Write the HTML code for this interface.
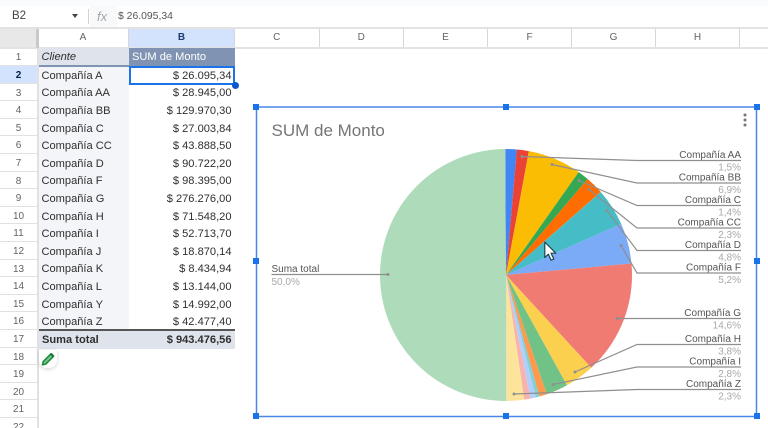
<!DOCTYPE html>
<html><head><meta charset="utf-8"><style>
html,body{margin:0;padding:0;background:#fff}
#p{position:relative;width:768px;height:428px;overflow:hidden;background:#fff;font-family:"Liberation Sans",sans-serif;color:#333;filter:blur(.3px)}
.a{position:absolute}
.t{position:absolute;white-space:nowrap;font-size:11.1px;line-height:17.6px;height:17.6px;color:#2f2f2f;margin-top:.8px}
.r{position:absolute;left:0;width:37px;text-align:center;font-size:10px;color:#5f6368;line-height:20px;border-bottom:1px solid #e1e1e1;height:16.6px;box-sizing:content-box}
.c{position:absolute;top:29px;height:18px;line-height:18px;text-align:center;font-size:10px;color:#5f6368;border-right:1px solid #d6d6d6;box-sizing:border-box}
.v{text-align:right;left:129px;width:102.5px}
.n{left:41.5px}
svg text{font-family:"Liberation Sans",sans-serif}
</style></head><body><div id="p">
<div class="a" style="left:0;top:0;width:768px;height:6px;background:#f9fbfd"></div>
<div class="a" style="left:0;top:27px;width:768px;height:2px;background:#e3e3e3"></div>
<div class="a" style="left:0;top:47px;width:768px;height:1.5px;background:#e3e3e3"></div>
<div class="a" style="left:88px;top:9px;width:1px;height:15px;background:#d0d3d6"></div>
<div class="a" style="left:90px;top:6px;width:27px;height:21px;background:#f8f9fa"></div>
<div class="a" style="left:12px;top:8px;font-size:11.5px;line-height:16px;color:#444">B2</div>
<div class="a" style="left:72px;top:14px;width:0;height:0;border-left:3.5px solid transparent;border-right:3.5px solid transparent;border-top:4px solid #444"></div>
<div class="a" style="left:97px;top:8px;font:italic 13px/17px 'Liberation Sans',sans-serif;color:#a4a7aa">fx</div>
<div class="a" style="left:118px;top:9px;font-size:10.4px;line-height:16px;color:#555">$ 26.095,34</div>

<div class="a" style="left:0;top:29px;width:36px;height:18px;background:#e8e8e8"></div>
<div class="a" style="left:36px;top:29px;width:2.5px;height:19px;background:#c9c9c9"></div>
<div class="a" style="left:37px;top:48px;width:1.5px;height:380px;background:#e1e1e1"></div>
<div class="a" style="left:129px;top:29px;width:106px;height:18px;background:#d3e3fd"></div>
<div class="c" style="left:38px;width:91px">A</div>
<div class="c" style="left:129px;width:106px;color:#1d3c70;font-weight:bold">B</div>
<div class="c" style="left:235px;width:84.5px">C</div>
<div class="c" style="left:319.5px;width:84.5px">D</div>
<div class="c" style="left:404px;width:84px">E</div>
<div class="c" style="left:488px;width:84px">F</div>
<div class="c" style="left:572px;width:84px">G</div>
<div class="c" style="left:656px;width:84px">H</div>
<div class="a" style="left:0;top:65px;width:37px;height:1px;background:#e1e1e1"></div>

<div class="a" style="left:0;top:66px;width:37px;height:18px;background:#d3e3fd"></div>
<div class="r" style="top:48.4px">1</div>
<div class="r" style="top:66px;color:#041e49;font-weight:bold">2</div>
<div class="r" style="top:83.6px">3</div>
<div class="r" style="top:101.2px">4</div>
<div class="r" style="top:118.8px">5</div>
<div class="r" style="top:136.4px">6</div>
<div class="r" style="top:154px">7</div>
<div class="r" style="top:171.6px">8</div>
<div class="r" style="top:189.2px">9</div>
<div class="r" style="top:206.8px">10</div>
<div class="r" style="top:224.4px">11</div>
<div class="r" style="top:242px">12</div>
<div class="r" style="top:259.6px">13</div>
<div class="r" style="top:277.2px">14</div>
<div class="r" style="top:294.8px">15</div>
<div class="r" style="top:312.4px">16</div>
<div class="r" style="top:330px">17</div>
<div class="r" style="top:347.6px">18</div>
<div class="r" style="top:365.2px">19</div>
<div class="r" style="top:382.8px">20</div>
<div class="r" style="top:400.4px">21</div>
<div class="r" style="top:418px">22</div>

<div class="a" style="left:38.5px;top:48px;width:90px;height:18px;background:#dfe3eb"></div>
<div class="a" style="left:128.5px;top:48px;width:106.5px;height:18px;background:#8093b3"></div>
<div class="a" style="left:38.5px;top:65px;width:90px;height:2px;background:#8093b3"></div>
<div class="a" style="left:38.5px;top:67px;width:90px;height:262px;background:#f3f5f8"></div>
<div class="a" style="left:38.5px;top:331px;width:196.5px;height:18px;background:#dfe3eb"></div>
<div class="a" style="left:38.5px;top:329px;width:196.5px;height:2px;background:#555"></div>

<div class="t n" style="top:48px;font-style:italic">Cliente</div>
<div class="t" style="left:132px;top:48px;color:#fff">SUM de Monto</div>
<div class="t n" style="top:67px">Compañía A</div><div class="t v" style="top:67px">$ 26.095,34</div>
<div class="t n" style="top:84.6px">Compañía AA</div><div class="t v" style="top:84.6px">$ 28.945,00</div>
<div class="t n" style="top:102.2px">Compañía BB</div><div class="t v" style="top:102.2px">$ 129.970,30</div>
<div class="t n" style="top:119.8px">Compañía C</div><div class="t v" style="top:119.8px">$ 27.003,84</div>
<div class="t n" style="top:137.4px">Compañía CC</div><div class="t v" style="top:137.4px">$ 43.888,50</div>
<div class="t n" style="top:155px">Compañía D</div><div class="t v" style="top:155px">$ 90.722,20</div>
<div class="t n" style="top:172.6px">Compañía F</div><div class="t v" style="top:172.6px">$ 98.395,00</div>
<div class="t n" style="top:190.2px">Compañía G</div><div class="t v" style="top:190.2px">$ 276.276,00</div>
<div class="t n" style="top:207.8px">Compañía H</div><div class="t v" style="top:207.8px">$ 71.548,20</div>
<div class="t n" style="top:225.4px">Compañía I</div><div class="t v" style="top:225.4px">$ 52.713,70</div>
<div class="t n" style="top:243px">Compañía J</div><div class="t v" style="top:243px">$ 18.870,14</div>
<div class="t n" style="top:260.6px">Compañía K</div><div class="t v" style="top:260.6px">$ 8.434,94</div>
<div class="t n" style="top:278.2px">Compañía L</div><div class="t v" style="top:278.2px">$ 13.144,00</div>
<div class="t n" style="top:295.8px">Compañía Y</div><div class="t v" style="top:295.8px">$ 14.992,00</div>
<div class="t n" style="top:313.4px">Compañía Z</div><div class="t v" style="top:313.4px">$ 42.477,40</div>
<div class="t n" style="top:331.5px;font-weight:bold;left:42px">Suma total</div><div class="t v" style="top:331.5px;font-weight:bold">$ 943.476,56</div>

<div class="a" style="left:129px;top:66px;width:106px;height:18.5px;border:2px solid #1a73e8;box-sizing:border-box"></div>
<div class="a" style="left:231.5px;top:81.5px;width:7px;height:7px;border-radius:50%;background:#0b57d0"></div>

<div class="a" style="left:39px;top:350px;width:18px;height:18px;border-radius:0 0 8px 8px;background:#fff;box-shadow:0 1px 4px rgba(0,0,0,.18)"></div>
<svg class="a" style="left:39px;top:350px" width="18" height="18" viewBox="0 0 18 18"><path d="M3.5 14.800l.8-3.300 7.700-7.700 2.500 2.500-7.700 7.700z" fill="#7cc592" stroke="#1e8e3e" stroke-width="1.600" stroke-linejoin="round"/><path d="M11.500 3.500l3 3" stroke="#137333" stroke-width="2.200"/></svg>

<svg class="a" style="left:0;top:0" width="768" height="428" viewBox="0 0 768 428">
<rect x="256.5" y="107" width="500" height="309.5" fill="#fff" stroke="#4a86e8" stroke-width="1.5"/>
<g fill="#1a73e8"><rect x="253" y="104" width="6" height="6"/><rect x="503" y="104" width="6" height="6"/><rect x="754" y="104" width="6" height="6"/><rect x="253" y="258" width="6" height="6"/><rect x="754" y="258" width="6" height="6"/><rect x="253" y="413" width="6" height="6"/><rect x="503" y="413" width="6" height="6"/><rect x="754" y="413" width="6" height="6"/></g>
<g fill="#757575"><circle cx="745" cy="115" r="1.5"/><circle cx="745" cy="120" r="1.5"/><circle cx="745" cy="125" r="1.5"/></g>
<text x="271.5" y="136" font-size="17" fill="#757575">SUM de Monto</text>
<g fill="none" stroke-width="126" transform="rotate(-90 506 275)">
<circle cx="506" cy="275" r="63" pathLength="100" stroke="#4285f4" stroke-dasharray="1.38 98.62" stroke-dashoffset="0"/>
<circle cx="506" cy="275" r="63" pathLength="100" stroke="#ea4335" stroke-dasharray="1.53 98.47" stroke-dashoffset="-1.38"/>
<circle cx="506" cy="275" r="63" pathLength="100" stroke="#fbbc04" stroke-dasharray="6.89 93.11" stroke-dashoffset="-2.91"/>
<circle cx="506" cy="275" r="63" pathLength="100" stroke="#34a853" stroke-dasharray="1.43 98.57" stroke-dashoffset="-9.8"/>
<circle cx="506" cy="275" r="63" pathLength="100" stroke="#ff6d01" stroke-dasharray="2.33 97.67" stroke-dashoffset="-11.23"/>
<circle cx="506" cy="275" r="63" pathLength="100" stroke="#46bdc6" stroke-dasharray="4.81 95.19" stroke-dashoffset="-13.56"/>
<circle cx="506" cy="275" r="63" pathLength="100" stroke="#7baaf7" stroke-dasharray="5.21 94.79" stroke-dashoffset="-18.37"/>
<circle cx="506" cy="275" r="63" pathLength="100" stroke="#f07b72" stroke-dasharray="14.64 85.36" stroke-dashoffset="-23.58"/>
<circle cx="506" cy="275" r="63" pathLength="100" stroke="#fcd04f" stroke-dasharray="3.79 96.21" stroke-dashoffset="-38.22"/>
<circle cx="506" cy="275" r="63" pathLength="100" stroke="#71c287" stroke-dasharray="2.79 97.21" stroke-dashoffset="-42.01"/>
<circle cx="506" cy="275" r="63" pathLength="100" stroke="#ff994d" stroke-dasharray="1 99" stroke-dashoffset="-44.8"/>
<circle cx="506" cy="275" r="63" pathLength="100" stroke="#7ed1d7" stroke-dasharray="0.45 99.55" stroke-dashoffset="-45.8"/>
<circle cx="506" cy="275" r="63" pathLength="100" stroke="#b3cefb" stroke-dasharray="0.7 99.3" stroke-dashoffset="-46.25"/>
<circle cx="506" cy="275" r="63" pathLength="100" stroke="#f7b4ae" stroke-dasharray="0.8 99.2" stroke-dashoffset="-46.95"/>
<circle cx="506" cy="275" r="63" pathLength="100" stroke="#fde49b" stroke-dasharray="2.25 97.75" stroke-dashoffset="-47.75"/>
<circle cx="506" cy="275" r="63" pathLength="100" stroke="#aedcba" stroke-dasharray="50 50" stroke-dashoffset="-50"/>
</g>
<g fill="none" stroke="#8f8f8f" stroke-width="1.2">
<path d="M522 156.500L637 160.500H741"/>
<path d="M552 164.500L637 183H741"/>
<path d="M579 180.500L637 205.500H741"/>
<path d="M589 189.500L637 228H741"/>
<path d="M607 210.500L637 250.500H741"/>
<path d="M621 245.500L637 273H741"/>
<path d="M617 318.500H741"/>
<path d="M575 372L637 344.500H741"/>
<path d="M553 384.500L637 367H741"/>
<path d="M514 394L637 389.500H741"/>
<path d="M271.500 274.500H388"/>
</g>
<g fill="#8f8f8f"><circle cx="522" cy="156.500" r="1.5"/><circle cx="552" cy="164.500" r="1.5"/><circle cx="579" cy="180.500" r="1.5"/><circle cx="589" cy="189.500" r="1.5"/><circle cx="607" cy="210.500" r="1.5"/><circle cx="621" cy="245.500" r="1.5"/><circle cx="617" cy="318.500" r="1.5"/><circle cx="575" cy="372" r="1.5"/><circle cx="553" cy="384.500" r="1.5"/><circle cx="514" cy="394" r="1.5"/><circle cx="388" cy="274.500" r="1.5"/></g>
<g font-size="10" fill="#555" text-anchor="end">
<text x="741" y="158">Compañía AA</text><text x="741" y="180.500">Compañía BB</text><text x="741" y="203">Compañía C</text><text x="741" y="225.500">Compañía CC</text><text x="741" y="248">Compañía D</text><text x="741" y="270.500">Compañía F</text><text x="741" y="316">Compañía G</text><text x="741" y="342">Compañía H</text><text x="741" y="364.500">Compañía I</text><text x="741" y="387">Compañía Z</text>
</g>
<g font-size="10" fill="#a8a8a8" text-anchor="end">
<text x="741" y="170.500">1,5%</text><text x="741" y="193">6,9%</text><text x="741" y="215.500">1,4%</text><text x="741" y="238">2,3%</text><text x="741" y="260.500">4,8%</text><text x="741" y="283">5,2%</text><text x="741" y="328.500">14,6%</text><text x="741" y="354.500">3,8%</text><text x="741" y="377">2,8%</text><text x="741" y="399.500">2,3%</text>
</g>
<text x="271.500" y="272" font-size="10" fill="#555">Suma total</text>
<text x="271.500" y="285" font-size="10" fill="#a8a8a8">50,0%</text>
<path d="M544.800 242v15.500l3.600-3.300 2.700 6 2.700-1.200-2.700-5.800h4.700z" fill="#fff" stroke="#1f4650" stroke-width="1.2" stroke-linejoin="round"/>
</svg>
</div></body></html>
